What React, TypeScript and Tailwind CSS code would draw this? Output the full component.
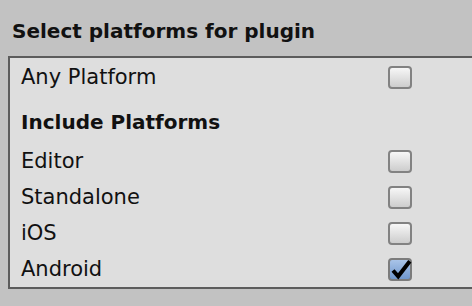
import React from 'react'

const platforms = [
  { name: 'Editor', checked: false },
  { name: 'Standalone', checked: false },
  { name: 'iOS', checked: false },
  { name: 'Android', checked: true },
]

function Checkbox({ checked }: { checked: boolean }) {
  if (checked) {
    return (
      <div className="relative w-[24px] h-[23px] rounded-[4px] border-2 border-[#7c7c7c] bg-gradient-to-b from-[#a9c4e8] to-[#7097cc]">
        <svg className="absolute -left-[2px] -top-[2px]" width="24" height="23" viewBox="0 0 24 23">
          <path d="M5 12.5 L10.2 18.3 L21.8 3.2" fill="none" stroke="#000" strokeWidth="4" strokeLinecap="butt" strokeLinejoin="miter" />
        </svg>
      </div>
    )
  }
  return (
    <div className="w-[24px] h-[23px] rounded-[4px] border-2 border-[#828282] bg-gradient-to-b from-[#f7f7f7] to-[#cdcdcd]" />
  )
}

function Row({ label, checked }: { label: string; checked: boolean }) {
  return (
    <div className="h-[36px] flex items-center">
      <span className="pl-[11px] w-[378px] leading-none">{label}</span>
      <Checkbox checked={checked} />
    </div>
  )
}

export default function App() {
  return (
    <div
      className="w-[472px] h-[306px] overflow-hidden bg-[#c2c2c2] text-[#111] text-[21px]"
      style={{ fontFamily: '"DejaVu Sans", sans-serif' }}
    >
      <div className="h-[56px] flex items-center pl-[12px] pt-[6px] font-bold text-[20px] leading-none">
        Select platforms for plugin
      </div>
      <div className="ml-[8px] w-[480px] border-2 border-[#5c5c5c] bg-[#dedede] pt-[1px]">
        <Row label="Any Platform" checked={false} />
        <div className="h-[36px] mt-[9px] mb-[3px] flex items-center pl-[11px] font-bold text-[20px] leading-none">
          Include Platforms
        </div>
        {platforms.map((p) => (
          <Row key={p.name} label={p.name} checked={p.checked} />
        ))}
      </div>
    </div>
  )
}
